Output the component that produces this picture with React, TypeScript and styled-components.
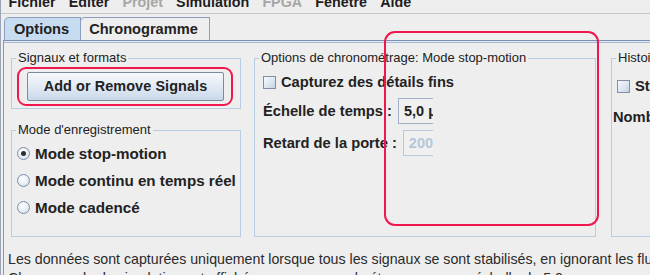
import React from 'react';
import styled, { createGlobalStyle } from 'styled-components';

const Global = createGlobalStyle`
  html, body { margin: 0; padding: 0; background: #eeeeee; overflow: hidden; }
  body { font-family: "Liberation Sans", Arial, sans-serif; color: #222; }
`;

const FONT = `"Liberation Sans", Arial, sans-serif`;

const Window = styled.div`
  position: relative;
  width: 650px;
  height: 275px;
  overflow: hidden;
  box-sizing: border-box;
  background: #eeeeee;
  border-left: 1px solid #9aa4b6;
`;

const MenuBar = styled.nav`
  display: flex;
  height: 13px;
  overflow: hidden;
  padding-left: 1px;
  border-bottom: 1px solid #c6c6c6;
`;

const MenuItem = styled.span<{ $disabled?: boolean }>`
  font: bold 14.3px/16px ${FONT};
  margin-top: -6px;
  padding: 0 6.6px;
  white-space: nowrap;
  color: ${(p) => (p.$disabled ? '#a6a6a6' : '#1e1e1e')};
`;

const TabStrip = styled.div`
  display: flex;
  align-items: flex-end;
  height: 23px;
  margin-top: 3px;
  padding-left: 3px;
`;

const Tab = styled.div<{ $active?: boolean; $pad: string }>`
  box-sizing: border-box;
  height: 23px;
  padding: ${(p) => p.$pad};
  border: 1px solid #8b9ec0;
  border-bottom: none;
  border-top-left-radius: 5px;
  background: ${(p) => (p.$active ? '#c8dcf1' : '#eeeeee')};
  font: bold 14.6px/22px ${FONT};
  color: #222;
  white-space: nowrap;
  & + & { margin-left: -1px; }
`;

const TabPanel = styled.section`
  margin-left: 2px;
  border-top: 1px solid #7b8fb4;
  border-left: 1px solid #8796b0;
  height: 240px;
`;

const PanelEdge = styled.div`
  height: 1px;
  background: #e3e9f1;
  border-bottom: 1px solid #a8b9d3;
`;

const PanelBody = styled.div`
  padding: 8px 0 0 0;
`;

const Columns = styled.div`
  display: grid;
  grid-template-columns: 230px 342px 220px;
  column-gap: 13px;
  padding-left: 7px;
  align-items: stretch;
`;

const Stack = styled.div`
  display: flex;
  flex-direction: column;
  gap: 14px;
`;

const Group = styled.fieldset<{ $shift?: number }>`
  margin: 0 0 0 ${(p) => p.$shift ?? 0}px;
  padding: 0;
  min-width: 0;
  box-sizing: border-box;
  border: 1px solid #b8cde4;
`;

const GroupTitle = styled.legend`
  font: 13px/14px ${FONT};
  color: #222;
  padding: 0 2px;
  margin-left: 4px;
  white-space: nowrap;
`;

const GroupBody = styled.div<{ $pad: string; $gap?: number }>`
  display: flex;
  flex-direction: column;
  gap: ${(p) => p.$gap ?? 0}px;
  padding: ${(p) => p.$pad};
`;

const Button = styled.button`
  box-sizing: border-box;
  width: 197px;
  height: 29px;
  padding: 0;
  border: 1px solid #7a8aa0;
  border-radius: 2px;
  background: linear-gradient(#f6f8fb 0%, #e4ecf5 45%, #c9d8e9 100%);
  font: bold 14.4px/27px ${FONT};
  color: #222;
  letter-spacing: 0.1px;
`;

const OptionRow = styled.label<{ $h: number; $size?: number }>`
  display: flex;
  align-items: center;
  gap: 5px;
  height: ${(p) => p.$h}px;
  font: bold ${(p) => p.$size ?? 14.5}px/18px ${FONT};
  color: #222;
  white-space: nowrap;
`;

const RadioDot = styled.span<{ $on?: boolean }>`
  flex: none;
  box-sizing: border-box;
  width: 13px;
  height: 13px;
  border-radius: 50%;
  border: 1px solid #7f8ea6;
  background: radial-gradient(circle at 40% 35%, #ffffff 0%, #e6edf5 55%, #c7d3e2 100%);
  display: flex;
  align-items: center;
  justify-content: center;
  &::after {
    content: '';
    display: ${(p) => (p.$on ? 'block' : 'none')};
    width: 5px;
    height: 5px;
    border-radius: 50%;
    background: #2e2e2e;
  }
`;

const CheckBox = styled.span`
  flex: none;
  box-sizing: border-box;
  width: 13px;
  height: 13px;
  border: 1px solid #7f8ea6;
  background: linear-gradient(135deg, #f7f9fc 0%, #dde6f0 55%, #c6d3e3 100%);
`;

const ClipBox = styled.div`
  width: 170px;
  overflow: hidden;
  display: flex;
  flex-direction: column;
  gap: 6px;
`;

const FieldRow = styled.div`
  display: flex;
  align-items: center;
  gap: 6px;
  height: 26px;
  font: bold 14.7px/18px ${FONT};
  color: #222;
  white-space: nowrap;
`;

const Field = styled.div<{ $disabled?: boolean }>`
  flex: none;
  box-sizing: border-box;
  width: 64px;
  height: 26px;
  padding-left: 5px;
  border: 1px solid ${(p) => (p.$disabled ? '#b9c8da' : '#9fb0c8')};
  background: #f0f0f0;
  font: bold 14.5px/24px ${FONT};
  color: ${(p) => (p.$disabled ? '#b6c6da' : '#222')};
`;

const SideLabel = styled.div`
  margin-left: -4px;
  height: 26px;
  font: bold 14.7px/26px ${FONT};
  color: #222;
  white-space: nowrap;
`;

const Note = styled.div`
  margin-top: 13px;
  padding-left: 4px;
  font: 14.2px/19px ${FONT};
  color: #2a2a2a;
  white-space: nowrap;
`;

const NoteLine = styled.div``;

const Annotation = styled.div<{ $x: number; $y: number; $w: number; $h: number; $r: number }>`
  position: absolute;
  left: ${(p) => p.$x}px;
  top: ${(p) => p.$y}px;
  width: ${(p) => p.$w}px;
  height: ${(p) => p.$h}px;
  box-sizing: border-box;
  border: 2px solid #f1174e;
  border-radius: ${(p) => p.$r}px;
  pointer-events: none;
`;

const menus: { label: string; disabled?: boolean }[] = [
  { label: 'Fichier' },
  { label: 'Editer' },
  { label: 'Projet', disabled: true },
  { label: 'Simulation' },
  { label: 'FPGA', disabled: true },
  { label: 'Fenêtre' },
  { label: 'Aide' },
];

const modes = [
  { label: 'Mode stop-motion', on: true },
  { label: 'Mode continu en temps réel' },
  { label: 'Mode cadencé' },
];

export default function App() {
  return (
    <>
      <Global />
      <Window>
        <MenuBar>
          {menus.map((m) => (
            <MenuItem key={m.label} $disabled={m.disabled}>
              {m.label}
            </MenuItem>
          ))}
        </MenuBar>
        <TabStrip>
          <Tab $active $pad="0 11px 0 9px">Options</Tab>
          <Tab $pad="0 11px 0 8px">Chronogramme</Tab>
        </TabStrip>
        <TabPanel>
          <PanelEdge />
          <PanelBody>
            <Columns>
              <Stack>
                <Group>
                  <GroupTitle>Signaux et formats</GroupTitle>
                  <GroupBody $pad="7px 0 7px 15px">
                    <Button type="button">Add or Remove Signals</Button>
                  </GroupBody>
                </Group>
                <Group>
                  <GroupTitle>Mode d'enregistrement</GroupTitle>
                  <GroupBody $pad="3px 0 15px 5px">
                    {modes.map((m) => (
                      <OptionRow key={m.label} $h={27} $size={15.2}>
                        <RadioDot $on={m.on} />
                        {m.label}
                      </OptionRow>
                    ))}
                  </GroupBody>
                </Group>
              </Stack>
              <Group>
                <GroupTitle>Options de chronométrage: Mode stop-motion</GroupTitle>
                <GroupBody $pad="7px 0 0 8px" $gap={6}>
                  <OptionRow $h={20} $size={14.7}>
                    <CheckBox />
                    Capturez des détails fins
                  </OptionRow>
                  <ClipBox>
                    <FieldRow>
                      Échelle de temps :<Field>5,0 µs</Field>
                    </FieldRow>
                    <FieldRow>
                      Retard de la porte :<Field $disabled>200 ns</Field>
                    </FieldRow>
                  </ClipBox>
                </GroupBody>
              </Group>
              <Group $shift={2}>
                <GroupTitle>Histoire</GroupTitle>
                <GroupBody $pad="11px 0 0 5px" $gap={8}>
                  <OptionRow $h={20} $size={14.7}>
                    <CheckBox />
                    Stocker l'historique
                  </OptionRow>
                  <SideLabel>Nombre d'échantillons</SideLabel>
                </GroupBody>
              </Group>
            </Columns>
            <Note>
              <NoteLine>
                Les données sont capturées uniquement lorsque tous les signaux se sont stabilisés, en ignorant les fluctuations.
              </NoteLine>
              <NoteLine>
                Chaque cycle de simulation est affiché comme une seule étape, avec une échelle de 5,0 µs.
              </NoteLine>
            </Note>
          </PanelBody>
        </TabPanel>
        <Annotation $x={16} $y={67} $w={216} $h={39} $r={9} />
        <Annotation $x={383} $y={31} $w={215} $h={195} $r={11} />
      </Window>
    </>
  );
}
